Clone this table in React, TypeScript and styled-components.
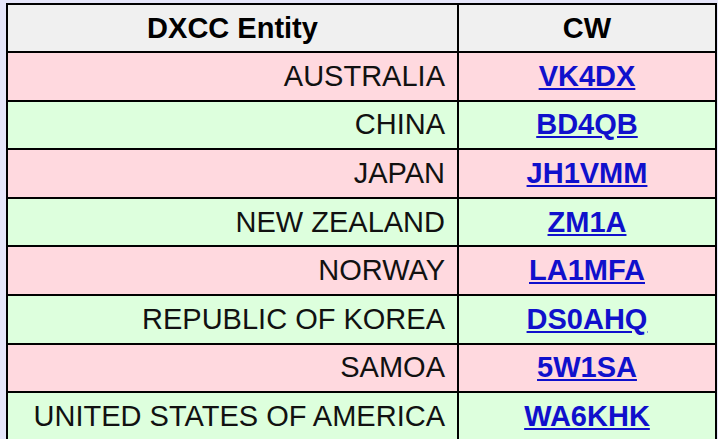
import styled, { createGlobalStyle } from 'styled-components';

const GlobalStyle = createGlobalStyle`
  html, body {
    margin: 0;
    padding: 0;
    background-color: #e6e6fa;
  }
  body {
    font-family: 'Liberation Sans', Arial, sans-serif;
  }
`;

const rows = [
  { entity: 'AUSTRALIA', call: 'VK4DX' },
  { entity: 'CHINA', call: 'BD4QB' },
  { entity: 'JAPAN', call: 'JH1VMM' },
  { entity: 'NEW ZEALAND', call: 'ZM1A' },
  { entity: 'NORWAY', call: 'LA1MFA' },
  { entity: 'REPUBLIC OF KOREA', call: 'DS0AHQ' },
  { entity: 'SAMOA', call: '5W1SA' },
  { entity: 'UNITED STATES OF AMERICA', call: 'WA6KHK' },
];

export default function App() {
  return (
    <>
      <GlobalStyle />
      <Page>
        <Table>
          <colgroup>
            <col style={{ width: 451 }} />
            <col />
          </colgroup>
          <thead>
            <tr>
              <HeadCell>DXCC Entity</HeadCell>
              <HeadCell>CW</HeadCell>
            </tr>
          </thead>
          <tbody>
            {rows.map((row, i) => (
              <Row key={row.entity} $odd={i % 2 === 0}>
                <EntityCell>{row.entity}</EntityCell>
                <CallCell>
                  <CallLink href="#">{row.call}</CallLink>
                </CallCell>
              </Row>
            ))}
          </tbody>
        </Table>
      </Page>
    </>
  );
}

const Page = styled.div`
  padding: 3px 0 0 6px;
`;

const Table = styled.table`
  width: 711px;
  table-layout: fixed;
  border-collapse: collapse;
  border: 2px solid #000;
  font-size: 29px;
  color: #111;
`;

const HeadCell = styled.th`
  height: 46px;
  padding: 0 12px;
  background-color: #f0f0f0;
  border: 2px solid #000;
  font-weight: bold;
  text-align: center;
  color: #000;
`;

const Row = styled.tr<{ $odd: boolean }>`
  height: 48.6px;
  background-color: ${(p) => (p.$odd ? '#ffd9df' : '#ddffdd')};
`;

const EntityCell = styled.td`
  padding: 0 12px;
  border: 2px solid #000;
  text-align: right;
  white-space: nowrap;
`;

const CallCell = styled.td`
  padding: 0 12px;
  border: 2px solid #000;
  text-align: center;
`;

const CallLink = styled.a`
  color: #1010cc;
  font-weight: bold;
  text-decoration: underline;
`;
